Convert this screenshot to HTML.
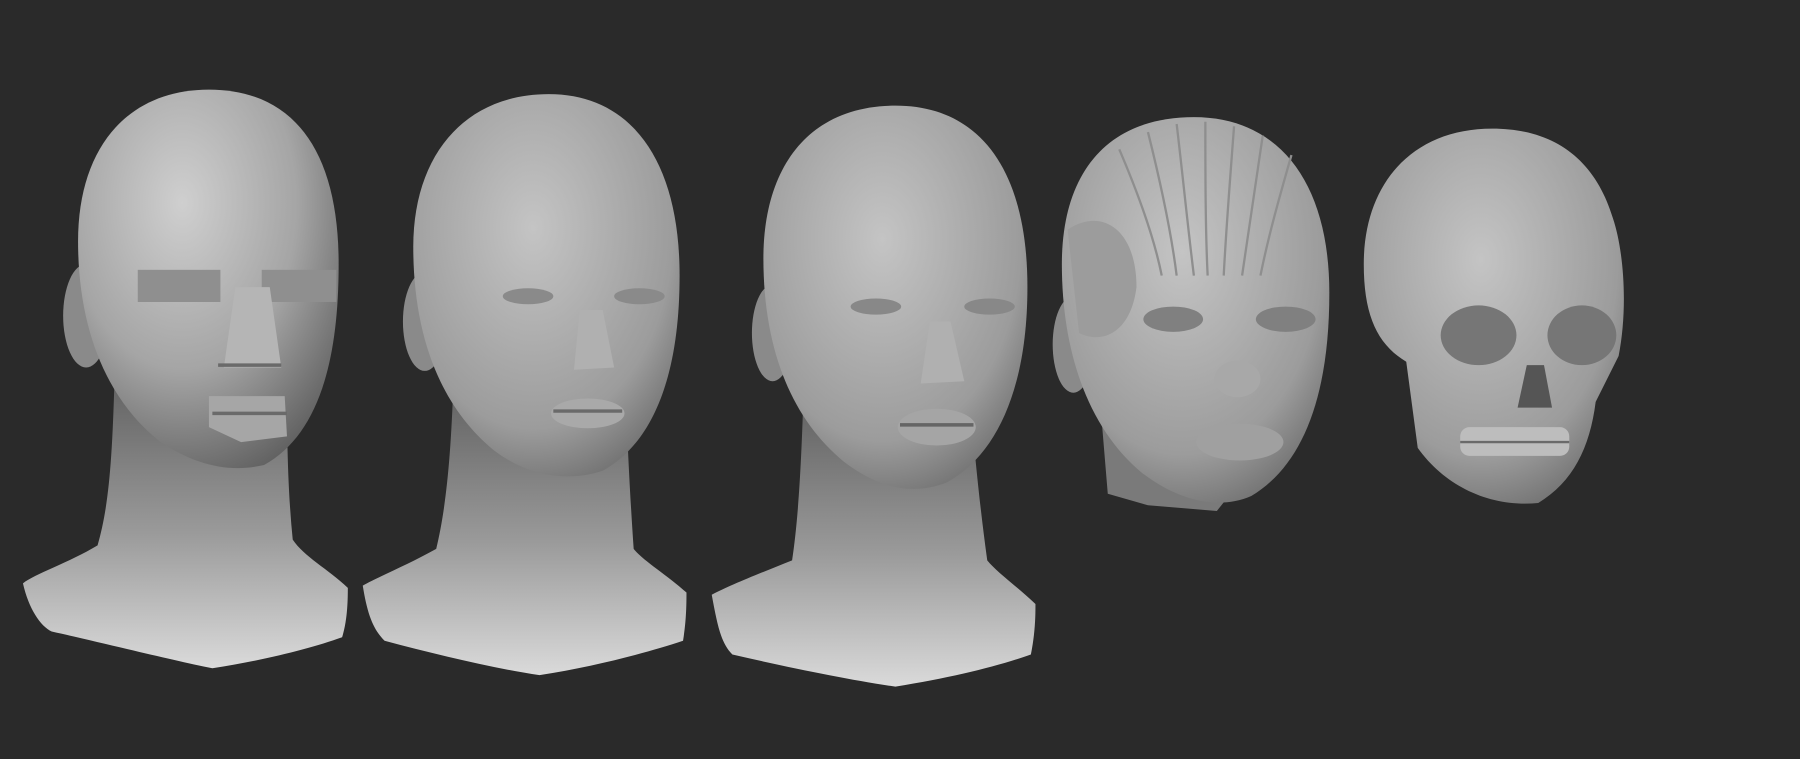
<!DOCTYPE html>
<html><head><meta charset="utf-8"><style>
html,body{margin:0;padding:0;background:#2a2a2a;width:1800px;height:759px;overflow:hidden}
svg{display:block}
</style></head><body>
<svg width="1800" height="759" viewBox="0 0 1568 661" preserveAspectRatio="none" xmlns="http://www.w3.org/2000/svg">
<defs>
<radialGradient id="g" cx="0.4" cy="0.3" r="0.8">
<stop offset="0" stop-color="#cfcfcf"/><stop offset="0.55" stop-color="#a5a5a5"/><stop offset="1" stop-color="#5a5a5a"/>
</radialGradient>
<linearGradient id="n" x1="0" y1="0" x2="0" y2="1">
<stop offset="0" stop-color="#5e5e5e"/><stop offset="0.55" stop-color="#9a9a9a"/><stop offset="1" stop-color="#dadada"/>
</linearGradient>
<radialGradient id="f" cx="0.45" cy="0.35" r="0.75">
<stop offset="0" stop-color="#c4c4c4"/><stop offset="0.7" stop-color="#9c9c9c"/><stop offset="1" stop-color="#666"/>
</radialGradient>
</defs>
<rect width="1568" height="661" fill="#2a2a2a"/>

<!-- Head 1 -->
<g>
<path d="M100 320 C98 400 95 440 85 475 C60 490 30 500 20 508 C25 530 35 545 45 550 C90 560 150 575 185 582 C230 575 270 565 298 555 C303 540 303 520 303 512 C285 495 265 485 255 470 C250 420 250 370 250 330 Z" fill="url(#n)"/>
<ellipse cx="75" cy="275" rx="20" ry="45" fill="#8a8a8a"/>
<path d="M182 78 C110 78 68 130 68 210 C68 290 95 350 140 385 C170 405 200 412 230 405 C275 380 295 320 295 230 C295 130 255 78 182 78 Z" fill="url(#g)"/>
<rect x="120" y="235" width="72" height="28" fill="#8f8f8f"/>
<rect x="228" y="235" width="65" height="28" fill="#8f8f8f"/>
<path d="M205 250 L235 250 L245 320 L195 320 Z" fill="#b5b5b5"/>
<path d="M190 318 L245 318" stroke="#6a6a6a" stroke-width="3"/>
<path d="M182 345 L248 345 L250 380 L210 385 L182 372 Z" fill="#a6a6a6"/>
<path d="M185 360 L250 360" stroke="#6a6a6a" stroke-width="3"/>
</g>

<!-- Head 2 -->
<g>
<path d="M395 330 C393 400 388 445 380 478 C355 492 330 502 316 510 C320 535 325 548 335 558 C380 570 430 582 470 588 C520 580 565 568 595 558 C598 540 598 525 598 516 C580 500 560 488 552 478 C548 420 546 370 545 340 Z" fill="url(#n)"/>
<ellipse cx="370" cy="280" rx="19" ry="43" fill="#8a8a8a"/>
<path d="M478 82 C405 82 360 135 360 215 C360 295 385 355 430 392 C460 415 495 420 525 410 C570 385 592 325 592 240 C592 140 550 82 478 82 Z" fill="url(#f)"/>
<ellipse cx="460" cy="258" rx="22" ry="7" fill="#8a8a8a"/>
<ellipse cx="557" cy="258" rx="22" ry="7" fill="#8a8a8a"/>
<path d="M505 270 L525 270 L535 320 L500 322 Z" fill="#b0b0b0"/>
<ellipse cx="512" cy="360" rx="32" ry="13" fill="#a9a9a9"/>
<path d="M482 358 L542 358" stroke="#6a6a6a" stroke-width="3"/>
</g>

<!-- Head 3 -->
<g>
<path d="M700 340 C698 410 695 455 690 488 C660 500 635 510 620 518 C625 545 628 560 638 570 C690 582 740 592 780 598 C830 590 870 580 898 570 C902 550 902 535 902 526 C885 510 868 498 860 488 C852 430 848 380 845 350 Z" fill="url(#n)"/>
<ellipse cx="673" cy="290" rx="18" ry="42" fill="#8a8a8a"/>
<path d="M780 92 C705 92 665 145 665 225 C665 305 690 365 735 402 C765 425 795 432 825 420 C870 395 895 335 895 250 C895 150 855 92 780 92 Z" fill="url(#f)"/>
<ellipse cx="763" cy="267" rx="22" ry="7" fill="#888"/>
<ellipse cx="862" cy="267" rx="22" ry="7" fill="#888"/>
<path d="M810 280 L828 280 L840 332 L802 334 Z" fill="#b0b0b0"/>
<ellipse cx="816" cy="372" rx="34" ry="16" fill="#a5a5a5"/>
<path d="M784 370 L848 370" stroke="#656565" stroke-width="3"/>
</g>

<!-- Head 4 ecorche -->
<g>
<path d="M960 370 L965 430 L1000 440 L1060 445 L1080 420 Z" fill="#7a7a7a"/>
<ellipse cx="935" cy="300" rx="18" ry="42" fill="#8a8a8a"/>
<path d="M1040 102 C965 102 925 150 925 230 C925 310 950 375 995 412 C1025 435 1060 445 1090 432 C1135 405 1158 345 1158 255 C1158 160 1115 102 1040 102 Z" fill="url(#f)"/>
<g stroke="#8e8e8e" stroke-width="2" fill="none">
<path d="M975 130 C990 165 1005 205 1012 240"/><path d="M1000 115 C1010 155 1020 200 1025 240"/>
<path d="M1025 108 C1030 150 1035 200 1040 240"/><path d="M1050 106 C1050 150 1050 200 1052 240"/>
<path d="M1075 110 C1072 150 1068 200 1066 240"/><path d="M1100 118 C1094 160 1088 200 1082 240"/>
<path d="M1125 135 C1115 170 1105 205 1098 240"/>
</g>
<path d="M930 200 C960 180 990 200 990 250 C985 290 960 300 940 290 Z" fill="#9c9c9c"/>
<ellipse cx="1022" cy="278" rx="26" ry="11" fill="#808080"/>
<ellipse cx="1120" cy="278" rx="26" ry="11" fill="#808080"/>
<ellipse cx="1078" cy="330" rx="20" ry="16" fill="#a8a8a8"/>
<ellipse cx="1080" cy="385" rx="38" ry="16" fill="#a0a0a0"/>
</g>

<!-- Skull -->
<g>
<path d="M1300 112 C1230 112 1188 160 1188 230 C1188 275 1200 300 1225 315 L1235 390 C1260 425 1300 442 1340 438 C1370 420 1385 390 1390 350 L1410 310 C1418 270 1415 220 1405 190 C1390 140 1355 112 1300 112 Z" fill="url(#f)"/>
<ellipse cx="1288" cy="292" rx="33" ry="26" fill="#767676"/>
<ellipse cx="1378" cy="292" rx="30" ry="26" fill="#767676"/>
<path d="M1330 318 L1345 318 L1352 355 L1322 355 Z" fill="#555"/>
<rect x="1272" y="372" width="95" height="25" rx="8" fill="#bdbdbd"/>
<path d="M1272 385 L1367 385" stroke="#6a6a6a" stroke-width="2"/>
</g>
</svg>
</body></html>
